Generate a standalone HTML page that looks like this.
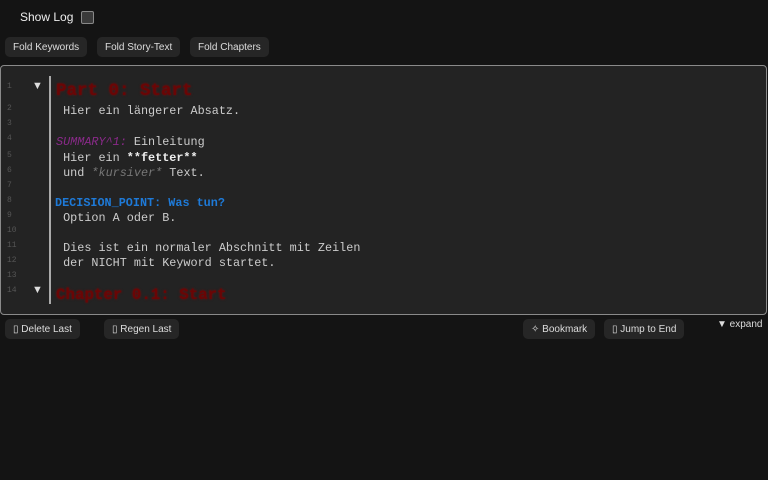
<!DOCTYPE html>
<html><head><meta charset="utf-8"><style>
body{margin:0;width:768px;height:480px;background:#141414;font-family:"Liberation Sans",sans-serif;color:#ddd;position:relative;overflow:hidden}
.a{position:absolute;white-space:pre}
.btn{position:absolute;background:#262626;border-radius:5px;font-size:10px;color:#ddd;height:20px;line-height:22px;padding:0 8px;white-space:nowrap}
.ed{position:absolute;left:0;top:65px;width:765px;height:248px;background:#232323;border:1px solid #8a8a8a;border-radius:4px}
.m{font-family:"Liberation Mono",monospace;font-size:11.8px;color:#ccc}
.n{font-family:"Liberation Mono",monospace;font-size:8px;color:#555;left:7px}
.h{font-family:"Liberation Mono",monospace;font-weight:bold;color:#6a0505;text-shadow:0 0 2px #7a0a0a}
</style></head><body>
<div class="a" style="left:20px;top:10px;font-size:12px;color:#eee">Show Log</div>
<div class="a" style="left:81px;top:11px;width:11px;height:11px;border:1px solid #888;border-radius:2px;background:#3a3a3a"></div>
<div class="btn" style="left:5px;top:37px">Fold Keywords</div>
<div class="btn" style="left:97px;top:37px">Fold Story-Text</div>
<div class="btn" style="left:190px;top:37px">Fold Chapters</div>
<div class="ed"></div>
<div class="a" style="left:49px;top:76px;width:2px;height:228px;background:#aaa"></div>
<div class="a n" style="top:82px">1</div>
<div class="a n" style="top:104px">2</div>
<div class="a n" style="top:119px">3</div>
<div class="a n" style="top:134px">4</div>
<div class="a n" style="top:151px">5</div>
<div class="a n" style="top:166px">6</div>
<div class="a n" style="top:181px">7</div>
<div class="a n" style="top:196px">8</div>
<div class="a n" style="top:211px">9</div>
<div class="a n" style="top:226px">10</div>
<div class="a n" style="top:241px">11</div>
<div class="a n" style="top:256px">12</div>
<div class="a n" style="top:271px">13</div>
<div class="a n" style="top:286px">14</div>
<div class="a" style="left:32px;top:80px;font-size:11px;color:#ddd">▼</div>
<div class="a" style="left:32px;top:284px;font-size:11px;color:#ddd">▼</div>
<div class="a h" style="left:56px;top:81px;font-size:17.5px">Part 0: Start</div>
<div class="a h" style="left:56px;top:286px;font-size:15.8px">Chapter 0.1: Start</div>
<div class="a m" style="left:56px;top:104px"> Hier ein längerer Absatz.</div>
<div class="a m" style="left:56px;top:135px"><i style="color:#8a2a8a">SUMMARY^1:</i> Einleitung</div>
<div class="a m" style="left:56px;top:151px"> Hier ein <b style="color:#eee">**fetter**</b></div>
<div class="a m" style="left:56px;top:166px"> und <i style="color:#777">*kursiver*</i> Text.</div>
<div class="a m" style="left:55px;top:196px;color:#1e7ad8;font-weight:bold">DECISION_POINT: <span>Was tun?</span></div>
<div class="a m" style="left:56px;top:211px"> Option A oder B.</div>
<div class="a m" style="left:56px;top:241px"> Dies ist ein normaler Abschnitt mit Zeilen</div>
<div class="a m" style="left:56px;top:256px"> der NICHT mit Keyword startet.</div>
<div class="btn" style="left:5px;top:319px">▯ Delete Last</div>
<div class="btn" style="left:104px;top:319px">▯ Regen Last</div>
<div class="btn" style="left:523px;top:319px">✧ Bookmark</div>
<div class="btn" style="left:604px;top:319px">▯ Jump to End</div>
<div class="a" style="left:717px;top:319px;font-size:10px;color:#ddd">▼ expand</div>
</body></html>
